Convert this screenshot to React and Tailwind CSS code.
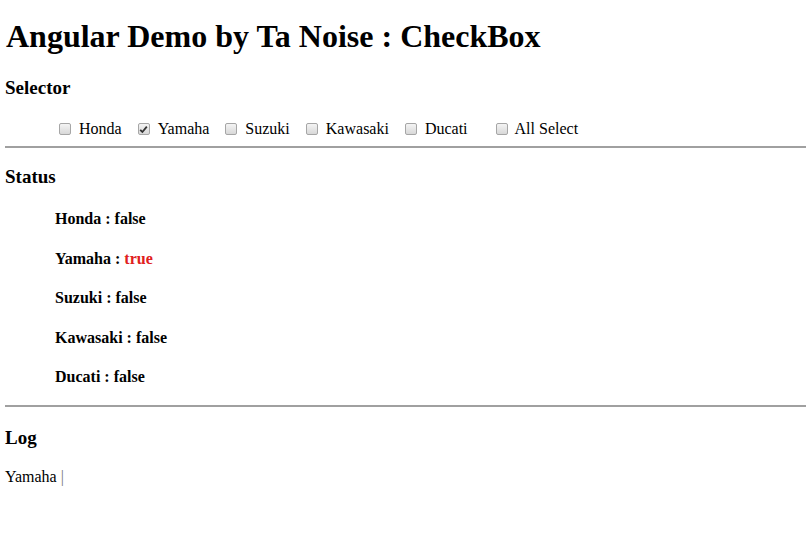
import React, { useState } from 'react';

const BIKES = ['Honda', 'Yamaha', 'Suzuki', 'Kawasaki', 'Ducati'];

// caixinha no estilo antigo do IE
const Caixa = ({ marcado }) => (
  <span className="inline-flex items-center justify-center w-[12px] h-[12px] border border-[#a6a6a6] rounded-[2px] bg-gradient-to-b from-[#f4f4f4] to-[#d8d8d8] align-middle">
    {marcado && (
      <svg width="9" height="9" viewBox="0 0 9 9">
        <path d="M1.2 4.8 L3.4 7 L7.8 1.6" fill="none" stroke="#333" strokeWidth="1.8" />
      </svg>
    )}
  </span>
);

const App = () => {
  const [estado] = useState({ Honda: false, Yamaha: true, Suzuki: false, Kawasaki: false, Ducati: false });

  return (
    <div className="pl-[5px] bg-white min-h-screen text-black" style={{ fontFamily: '"Liberation Serif", "Times New Roman", serif' }}>
      <h1 className="text-[32px] font-bold leading-[37px] pt-[18px] pl-[1px]">Angular Demo by Ta Noise : CheckBox</h1>

      <h3 className="text-[19px] font-bold leading-[21px] mt-[22px]">Selector</h3>
      <div className="flex items-center h-[20px] mt-[21px] pl-[54px] text-[16px]">
        {BIKES.map((b) => (
          <label key={b} className="flex items-center mr-[16px]">
            <Caixa marcado={estado[b]} />
            <span className="ml-[8px]">{b}</span>
          </label>
        ))}
        <label className="flex items-center ml-[12px]">
          <Caixa marcado={false} />
          <span className="ml-[7px]">All Select</span>
        </label>
      </div>
      <div className="h-[2px] bg-[#a0a0a0] mt-[7px]" />

      <h3 className="text-[19px] font-bold leading-[21px] mt-[18px]">Status</h3>
      <div className="pl-[50px] mt-[22px] text-[16px] font-bold">
        {BIKES.map((b) => (
          <p key={b} className="leading-[20px] mb-[19.5px]">
            {b} : <span className={estado[b] ? 'text-[#e02020]' : ''}>{String(estado[b])}</span>
          </p>
        ))}
      </div>
      <div className="h-[2px] bg-[#a0a0a0] -mt-[2px]" />

      <h3 className="text-[19px] font-bold leading-[21px] mt-[20px]">Log</h3>
      <p className="text-[16px] leading-[20px] mt-[19px]">
        Yamaha <span className="text-[#777]">|</span>
      </p>
    </div>
  );
};

export default App;
